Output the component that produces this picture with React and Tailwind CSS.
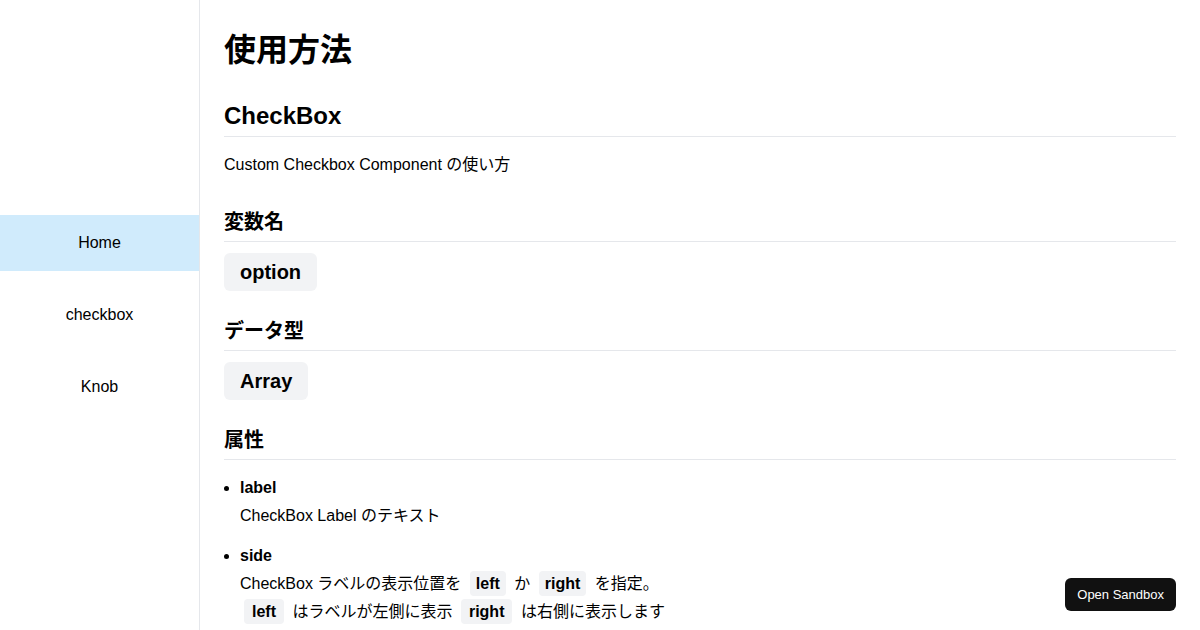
import React from 'react';

const navItems = ['Home', 'checkbox', 'Knob'];

function Code({ children, wide }) {
  return (
    <code
      className={
        'ml-1 mr-1 rounded bg-[#f2f3f5] py-1 font-bold [font-family:inherit] ' +
        (wide ? 'px-2' : 'px-1.5')
      }
    >
      {children}
    </code>
  );
}

function Section({ title, children }) {
  return (
    <>
      <h3 className="mt-[29px] border-b border-[#e5e7eb] pb-[7px] text-[20px] font-bold leading-[23px]">
        {title}
      </h3>
      {children}
    </>
  );
}

function Block({ children }) {
  return (
    <div className="mt-[11px] w-fit rounded-md bg-[#f2f3f5] px-4 py-[7px] text-[20px] font-bold leading-6">
      {children}
    </div>
  );
}

export default function App() {
  return (
    <div
      className="flex h-[630px] w-full overflow-hidden bg-white text-black"
      style={{ fontFamily: '"Liberation Sans", "Noto Sans CJK JP", sans-serif' }}
    >
      {/* sidebar */}
      <aside className="flex h-full w-[200px] shrink-0 flex-col justify-center gap-4 border-r border-[#e5e7eb]">
        {navItems.map((item) => (
          <a
            key={item}
            href="#"
            className={
              'flex h-14 items-center justify-center text-base ' +
              (item === 'Home' ? 'bg-[#d0ebfc]' : '')
            }
          >
            {item}
          </a>
        ))}
      </aside>

      {/* content */}
      <main className="flex-1 overflow-hidden px-6 pt-8">
        <h1 className="text-[32px] font-bold leading-[37px]">使用方法</h1>

        <h2 className="mt-[33px] border-b border-[#e5e7eb] pb-[7px] text-2xl font-bold leading-[27px]">
          CheckBox
        </h2>
        <p className="mt-4 text-base leading-6">Custom Checkbox Component の使い方</p>

        <div className="h-[5px]" />
        <Section title="変数名">
          <Block>option</Block>
        </Section>

        <Section title="データ型">
          <Block>Array</Block>
        </Section>

        <Section title="属性">
          <ul className="mt-[14px] list-disc pl-4 text-base leading-7">
            <li>
              <strong>label</strong>
              <br />
              CheckBox Label のテキスト
            </li>
            <li className="mt-3">
              <strong>side</strong>
              <br />
              CheckBox ラベルの表示位置を <Code>left</Code> か <Code>right</Code> を指定。
              <br />
              <Code wide>left</Code> はラベルが左側に表示 <Code wide>right</Code> は右側に表示します
            </li>
          </ul>
        </Section>
      </main>

      <button className="fixed bottom-[19px] right-6 h-[33px] rounded-md bg-[#111111] px-3 text-[13px] text-white">
        Open Sandbox
      </button>
    </div>
  );
}
